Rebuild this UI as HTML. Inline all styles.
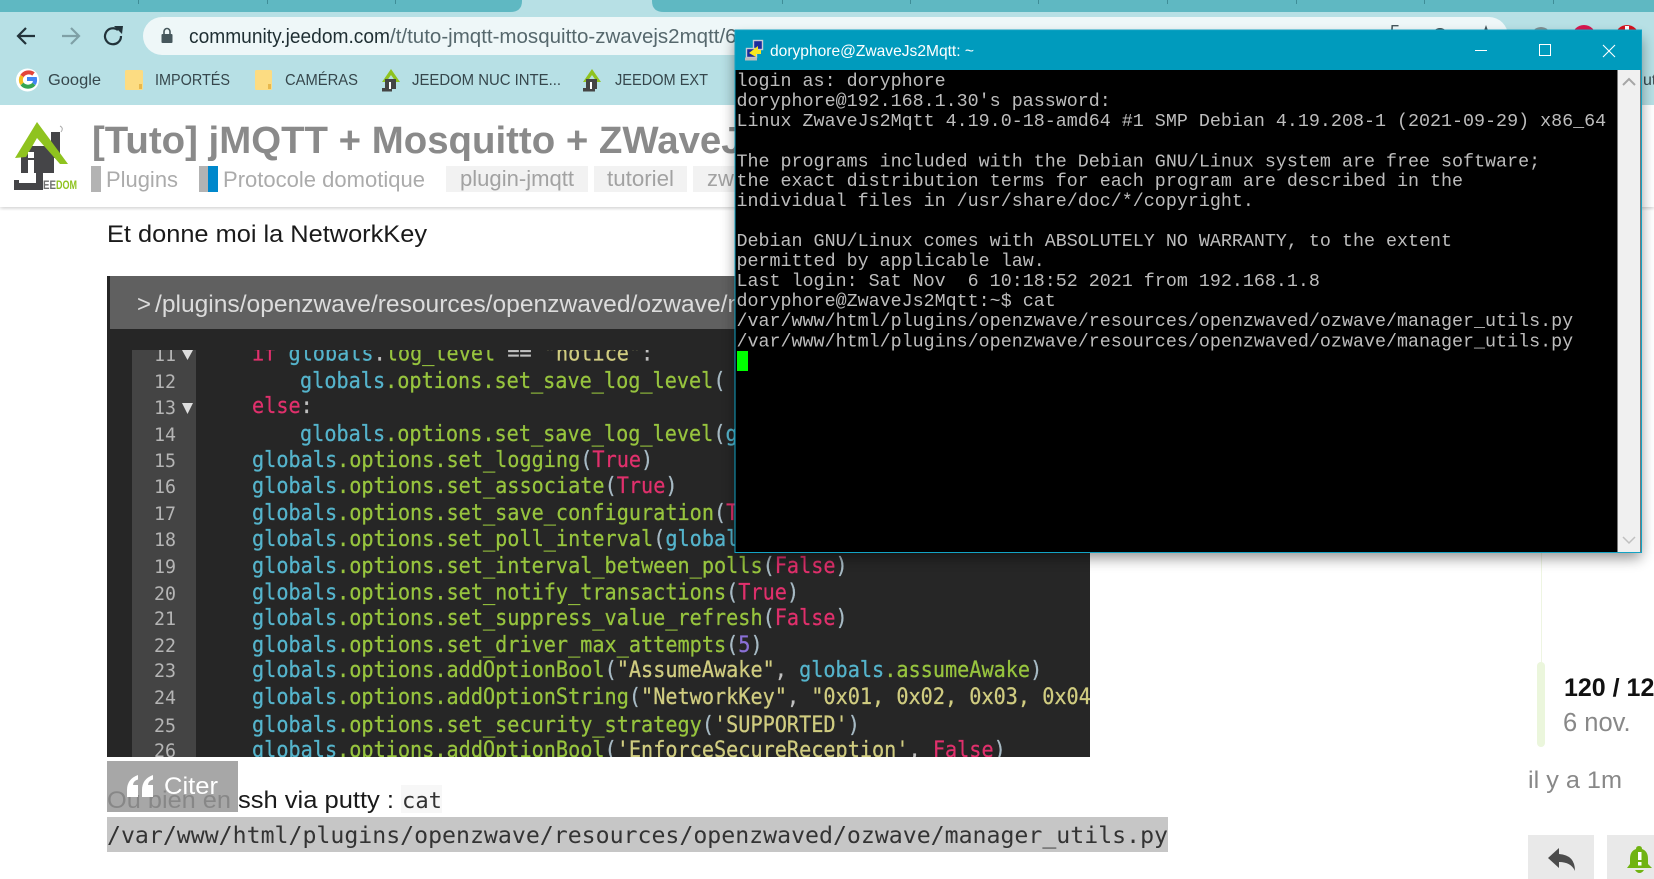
<!DOCTYPE html>
<html lang="fr"><head><meta charset="utf-8"><title>Tuto jMQTT</title>
<style>
html,body{margin:0;padding:0;background:#fff;width:1654px;height:879px;overflow:hidden}
svg{display:block}
text{font-family:"Liberation Sans",sans-serif;white-space:pre}
.c{font-family:"DejaVu Sans Mono",monospace;font-size:20.2px;fill:#55b4cc;stroke:#55b4cc;stroke-width:.25}
.c .m{fill:#97c43e;stroke:#97c43e}.c .r{fill:#e0306c;stroke:#e0306c}.c .y{fill:#d0cc80;stroke:#d0cc80}.c .p{fill:#a7bac4;stroke:#a7bac4}.c .w{fill:#c0c0c0;stroke:#c0c0c0}.c .v{fill:#8a70d6;stroke:#8a70d6}
.n{font-family:"DejaVu Sans Mono",monospace;font-size:18.3px;fill:#b5b5b5}
.t{font-family:"Liberation Mono",monospace;font-size:18.35px;fill:#bdbdbd}
.b{font-size:16px;fill:#36474c}
</style></head><body>
<svg width="1654" height="879" viewBox="0 0 1654 879" xmlns="http://www.w3.org/2000/svg">
<defs>
<filter id="sh" x="-5%" y="-5%" width="110%" height="115%"><feGaussianBlur stdDeviation="7"/></filter>
<filter id="s2" x="-2%" y="-50%" width="104%" height="200%"><feGaussianBlur stdDeviation="2"/></filter>
<clipPath id="code"><rect x="107" y="350" width="983" height="407"/></clipPath>
<clipPath id="url"><rect x="180" y="17" width="556" height="38"/></clipPath>
</defs>
<rect width="1654" height="879" fill="#fff"/>

<!-- browser chrome -->
<rect width="1654" height="105" fill="#b7e0e5"/>
<path d="M0 0H522V1Q522 12 510 12H0Z" fill="#5fb8c2"/>
<path d="M1654 0H652V1Q652 12 664 12H1654Z" fill="#5fb8c2"/>
<g fill="#3f8d97"><rect x="138" y="0" width="1" height="4"/><rect x="267" y="0" width="1" height="4"/><rect x="395" y="0" width="1" height="4"/><rect x="782" y="0" width="1" height="4"/><rect x="910" y="0" width="1" height="4"/><rect x="1038" y="0" width="1" height="4"/><rect x="1167" y="0" width="1" height="4"/><rect x="1296" y="0" width="1" height="4"/><rect x="1424" y="0" width="1" height="4"/><rect x="1553" y="0" width="1" height="4"/></g>
<rect x="143" y="17" width="1365" height="38" rx="19" fill="#eef7f8"/>
<path d="M35 36H18M26 28L18 36L26 44" fill="none" stroke="#22333a" stroke-width="2.2"/>
<path d="M62 36H79M71 28L79 36L71 44" fill="none" stroke="#7fa0a6" stroke-width="2.2"/>
<path d="M121 36A8 8 0 1 1 118 30" fill="none" stroke="#22333a" stroke-width="2.2"/><path d="M114 26L123 26L122 34Z" fill="#22333a"/>
<rect x="161.500" y="34" width="11" height="9" rx="1" fill="#46575c"/><path d="M164 34V31.500A3 3 0 0 1 170 31.500V34" fill="none" stroke="#46575c" stroke-width="1.600"/>
<g clip-path="url(#url)">
<text x="189" y="43" font-size="20" fill="#1f2f33" textLength="201" lengthAdjust="spacingAndGlyphs">community.jeedom.com</text>
<text x="390" y="43" font-size="20" fill="#56686d" textLength="358" lengthAdjust="spacingAndGlyphs">/t/tuto-jmqtt-mosquitto-zwavejs2mqtt/62</text>
</g>
<!-- toolbar bits above terminal -->
<text x="1390" y="38" font-size="18" fill="#44565b">5</text>
<circle cx="1440" cy="36" r="7" fill="none" stroke="#44565b" stroke-width="2"/>
<path d="M1486 25L1490 36H1482Z" fill="#44565b"/>
<circle cx="1541" cy="37" r="10" fill="#7f8f92"/><circle cx="1584" cy="37" r="12" fill="#d7174f"/><circle cx="1627" cy="37" r="12" fill="#d6121e"/>
<rect x="1625" y="26" width="4" height="6" fill="#fff"/>

<!-- bookmarks -->
<circle cx="27.500" cy="80" r="11.500" fill="#fff"/>
<g fill="none" stroke-width="4"><path d="M33.500 74A8 8 0 0 0 22 76" stroke="#e3453a"/><path d="M22 76A8 8 0 0 0 22 84" stroke="#f4bd1f"/><path d="M22 84A8 8 0 0 0 34 84" stroke="#35a652"/><path d="M34 84A8 8 0 0 0 35 79H27" stroke="#4285f4"/></g>
<text class="b" x="48" y="85" textLength="53" lengthAdjust="spacingAndGlyphs">Google</text>
<rect x="125" y="70" width="18" height="20" rx="1.500" fill="#fcdc82"/><rect x="139" y="84" width="3" height="5" fill="#e8b84c"/>
<text class="b" x="155" y="85" textLength="75" lengthAdjust="spacingAndGlyphs">IMPORTÉS</text>
<rect x="255" y="70" width="17" height="20" rx="1.500" fill="#fcdc82"/><rect x="268" y="84" width="3" height="5" fill="#e8b84c"/>
<text class="b" x="285" y="85" textLength="73" lengthAdjust="spacingAndGlyphs">CAMÉRAS</text>
<path d="M391 69L400 82H396L391 75L386 82H382Z" fill="#8fc31f"/><rect x="385" y="79" width="11" height="10" fill="#444"/><rect x="382" y="88" width="10" height="3.500" fill="#444"/><rect x="389" y="82" width="2" height="7" fill="#fff"/>
<text class="b" x="412" y="85" textLength="149" lengthAdjust="spacingAndGlyphs">JEEDOM NUC INTE...</text>
<path d="M592 69L601 82H597L592 75L587 82H583Z" fill="#8fc31f"/><rect x="586" y="79" width="11" height="10" fill="#444"/><rect x="583" y="88" width="12" height="3.500" fill="#444"/><rect x="590" y="82" width="2" height="7" fill="#fff"/>
<text class="b" x="615" y="85" textLength="93" lengthAdjust="spacingAndGlyphs">JEEDOM EXT</text>
<text class="b" x="1643" y="85">ut</text>

<!-- header -->
<rect x="0" y="203" width="1654" height="5" fill="#000" opacity=".22" filter="url(#s2)"/>
<rect x="0" y="105" width="1654" height="102" fill="#fff"/>
<path d="M51 132H60V158H51Z" fill="#454548"/>
<path d="M21 157Q21 146 31 146H44Q54 146 54 157V173H21Z" fill="#454548"/>
<path d="M15 158L37 122L68 164H60L37 138L26 157Z" fill="#8fc31f"/>
<path d="M60 126Q64 128 61 132" fill="none" stroke="#aaa" stroke-width="1"/>
<rect x="28" y="152" width="6" height="6" fill="#fff"/><rect x="28" y="160" width="6" height="15" fill="#fff"/>
<path d="M14 180H19V183H36V173H43V190H14Z" fill="#454548"/>
<text x="43" y="189" font-size="12" font-weight="700" fill="#6f6f6f" textLength="13" lengthAdjust="spacingAndGlyphs">EE</text>
<text x="56" y="189" font-size="12" font-weight="700" fill="#8fc31f" textLength="21" lengthAdjust="spacingAndGlyphs">DOM</text>
<text x="92" y="153" font-size="38" font-weight="700" fill="#8a8a8a" textLength="672" lengthAdjust="spacingAndGlyphs">[Tuto] jMQTT + Mosquitto + ZWaveJs</text>
<rect x="91" y="166" width="10" height="26" fill="#b3b3b3"/>
<text x="106" y="187" font-size="22" fill="#ababab" textLength="72" lengthAdjust="spacingAndGlyphs">Plugins</text>
<rect x="199" y="166" width="9" height="26" fill="#b3b3b3"/><rect x="208" y="166" width="10" height="26" fill="#0088cc"/>
<text x="223" y="187" font-size="22" fill="#ababab" textLength="202" lengthAdjust="spacingAndGlyphs">Protocole domotique</text>
<rect x="446" y="166" width="142" height="26" fill="#f2f2f2"/>
<text x="460" y="186" font-size="22" fill="#a2a2a2" textLength="114" lengthAdjust="spacingAndGlyphs">plugin-jmqtt</text>
<rect x="594" y="166" width="93" height="26" fill="#f2f2f2"/>
<text x="607" y="186" font-size="22" fill="#a2a2a2" textLength="67" lengthAdjust="spacingAndGlyphs">tutoriel</text>
<rect x="693" y="166" width="60" height="26" fill="#f2f2f2"/>
<text x="707" y="186" font-size="22" fill="#a2a2a2">zw</text>

<text x="107" y="242" font-size="24" fill="#1a1a1a" textLength="320" lengthAdjust="spacingAndGlyphs">Et donne moi la NetworkKey</text>

<!-- code image -->
<rect x="107" y="276" width="983" height="481" fill="#262626"/>
<rect x="110" y="276" width="980" height="53" fill="#606060"/>
<text x="137" y="312" font-size="24" fill="#dcdcdc">&gt;</text>
<text x="155" y="312" font-size="24" fill="#dcdcdc" textLength="593" lengthAdjust="spacingAndGlyphs">/plugins/openzwave/resources/openzwaved/ozwave/m</text>
<rect x="132" y="350" width="64" height="407" fill="#444"/>
<g clip-path="url(#code)">
<g class="n">
<text class="n" x="154" y="361">11</text><text class="n" x="154" y="388">12</text><text class="n" x="154" y="414">13</text><text class="n" x="154" y="441">14</text><text class="n" x="154" y="467">15</text><text class="n" x="154" y="493">16</text><text class="n" x="154" y="520">17</text><text class="n" x="154" y="546">18</text><text class="n" x="154" y="573">19</text><text class="n" x="154" y="600">20</text><text class="n" x="154" y="625">21</text><text class="n" x="154" y="652">22</text><text class="n" x="154" y="677">23</text><text class="n" x="154" y="704">24</text><text class="n" x="154" y="732">25</text><text class="n" x="154" y="757">26</text>
</g>
<path d="M182 350H193L187.500 360Z M182 403H193L187.500 414Z" fill="#ddd"/>
<text class="c" transform="translate(252,360.500) scale(1,1.08)"><tspan class="r">if</tspan> globals<tspan class="w">.</tspan><tspan class="m">log_level</tspan> <tspan class="w">==</tspan> <tspan class="y">"notice"</tspan><tspan class="w">:</tspan></text>
<text class="c" transform="translate(300,388) scale(1,1.08)">globals<tspan class="m">.options.set_save_log_level</tspan><tspan class="p">(</tspan></text>
<text class="c" transform="translate(252,413) scale(1,1.08)"><tspan class="r">else</tspan><tspan class="w">:</tspan></text>
<text class="c" transform="translate(300,441) scale(1,1.08)">globals<tspan class="m">.options.set_save_log_level</tspan><tspan class="p">(</tspan>g</text>
<text class="c" transform="translate(252,467) scale(1,1.08)">globals<tspan class="m">.options.set_logging</tspan><tspan class="p">(</tspan><tspan class="r">True</tspan><tspan class="p">)</tspan></text>
<text class="c" transform="translate(252,493) scale(1,1.08)">globals<tspan class="m">.options.set_associate</tspan><tspan class="p">(</tspan><tspan class="r">True</tspan><tspan class="p">)</tspan></text>
<text class="c" transform="translate(252,520) scale(1,1.08)">globals<tspan class="m">.options.set_save_configuration</tspan><tspan class="p">(</tspan><tspan class="r">T</tspan></text>
<text class="c" transform="translate(252,546) scale(1,1.08)">globals<tspan class="m">.options.set_poll_interval</tspan><tspan class="p">(</tspan>global</text>
<text class="c" transform="translate(252,573) scale(1,1.08)">globals<tspan class="m">.options.set_interval_between_polls</tspan><tspan class="p">(</tspan><tspan class="r">False</tspan><tspan class="p">)</tspan></text>
<text class="c" transform="translate(252,599.500) scale(1,1.08)">globals<tspan class="m">.options.set_notify_transactions</tspan><tspan class="p">(</tspan><tspan class="r">True</tspan><tspan class="p">)</tspan></text>
<text class="c" transform="translate(252,625) scale(1,1.08)">globals<tspan class="m">.options.set_suppress_value_refresh</tspan><tspan class="p">(</tspan><tspan class="r">False</tspan><tspan class="p">)</tspan></text>
<text class="c" transform="translate(252,652) scale(1,1.08)">globals<tspan class="m">.options.set_driver_max_attempts</tspan><tspan class="p">(</tspan><tspan class="v">5</tspan><tspan class="p">)</tspan></text>
<text class="c" transform="translate(252,677) scale(1,1.08)">globals<tspan class="m">.options.addOptionBool</tspan><tspan class="p">(</tspan><tspan class="y">"AssumeAwake"</tspan><tspan class="w">, </tspan>globals<tspan class="m">.assumeAwake</tspan><tspan class="p">)</tspan></text>
<text class="c" transform="translate(252,704) scale(1,1.08)">globals<tspan class="m">.options.addOptionString</tspan><tspan class="p">(</tspan><tspan class="y">"NetworkKey"</tspan><tspan class="w">, </tspan><tspan class="y">"0x01, 0x02, 0x03, 0x04</tspan></text>
<text class="c" transform="translate(252,732) scale(1,1.08)">globals<tspan class="m">.options.set_security_strategy</tspan><tspan class="p">(</tspan><tspan class="y">'SUPPORTED'</tspan><tspan class="p">)</tspan></text>
<text class="c" transform="translate(252,757) scale(1,1.08)">globals<tspan class="m">.options.addOptionBool</tspan><tspan class="p">(</tspan><tspan class="y">'EnforceSecureReception'</tspan><tspan class="w">, </tspan><tspan class="r">False</tspan><tspan class="p">)</tspan></text>
</g>

<!-- body bottom -->
<text x="238" y="808" font-size="24" fill="#1a1a1a" textLength="156" lengthAdjust="spacingAndGlyphs">ssh via putty :</text>
<rect x="401" y="785" width="41" height="28" fill="#f7f7f7"/>
<text x="402" y="808" style="font-family:'DejaVu Sans Mono',monospace" font-size="22" fill="#333" textLength="40" lengthAdjust="spacingAndGlyphs">cat</text>
<rect x="107" y="817" width="1061" height="35" fill="#c6c6c6"/>
<text x="107" y="843" style="font-family:'DejaVu Sans Mono',monospace" font-size="23.200" fill="#333" textLength="1061" lengthAdjust="spacingAndGlyphs">/var/www/html/plugins/openzwave/resources/openzwaved/ozwave/manager_utils.py</text>
<text x="107" y="808" font-size="24" fill="#222" textLength="124" lengthAdjust="spacingAndGlyphs">Ou bien en</text>
<rect x="107" y="761" width="131" height="51" fill="#999" fill-opacity=".86"/>
<path d="M138 775Q127 779 127 790V797H138V785H133Q133 781 138 779.500Z M153 775Q142 779 142 790V797H153V785H148Q148 781 153 779.500Z" fill="#fff"/>
<text x="164" y="794" font-size="24" fill="#fff" textLength="54" lengthAdjust="spacingAndGlyphs">Citer</text>

<!-- timeline -->
<rect x="1541" y="552" width="1" height="112" fill="#eef5e2"/>
<rect x="1537" y="662" width="8" height="85" rx="4" fill="#ebf6dc"/>
<text x="1564" y="696" font-size="25" font-weight="700" fill="#111">120 / 12</text>
<text x="1563" y="731" font-size="25.500" fill="#888">6 nov.</text>
<text x="1528" y="788" font-size="24" fill="#888" textLength="94" lengthAdjust="spacingAndGlyphs">il y a 1m</text>
<rect x="1528" y="835" width="66" height="44" fill="#e9e9e9"/>
<rect x="1607" y="835" width="47" height="44" fill="#e9e9e9"/>
<path d="M1548 858L1559 848V854Q1575 855 1575 871Q1571 862 1559 862V868Z" fill="#4c4c4c"/>
<path d="M1639 846Q1642 846 1642 849Q1648 851 1648 859V864L1652 868H1627L1630 864V859Q1630 851 1636 849Q1636 846 1639 846Z" fill="#70b312"/>
<path d="M1635 870H1644Q1642 873 1639.500 873Q1637 873 1635 870Z" fill="#70b312"/>
<rect x="1638" y="852" width="3.500" height="8" fill="#fff"/><rect x="1638" y="862" width="3.500" height="3.500" fill="#fff"/>

<!-- terminal -->
<rect x="735" y="38" width="906" height="520" fill="#000" opacity=".42" filter="url(#sh)"/>
<rect x="735" y="30" width="906" height="40" fill="#009bbd"/>
<rect x="735" y="70" width="906" height="482.500" fill="#000"/>
<rect x="1617.500" y="70" width="23" height="482" fill="#f0f0f0"/>
<rect x="735" y="30" width="906.500" height="522.500" fill="none" stroke="#13a3c4" stroke-width="1"/>
<path d="M1623 85L1629 79L1635 85" fill="none" stroke="#a6a6a6" stroke-width="2"/>
<path d="M1623 537L1629 543L1635 537" fill="none" stroke="#c0c0c0" stroke-width="1.500"/>
<!-- putty icon -->
<rect x="753.500" y="40.500" width="9" height="9" fill="#1c2c9c" stroke="#c8ccd4" stroke-width="1.400"/>
<rect x="746.500" y="48.500" width="10" height="9" fill="#1c2c9c" stroke="#c8ccd4" stroke-width="1.400"/>
<rect x="745" y="57.500" width="12" height="3" fill="#bdbdbd"/>
<path d="M749 53L758 46V50H761V54H756V57Z" fill="#f7e81f"/>
<text x="770" y="56" font-size="16" fill="#fff" textLength="204" lengthAdjust="spacingAndGlyphs">doryphore@ZwaveJs2Mqtt: ~</text>
<rect x="1475" y="50" width="12" height="1" fill="#fff"/>
<rect x="1539.500" y="44.500" width="11" height="11" fill="none" stroke="#fff" stroke-width="1"/>
<path d="M1603 45L1615 57M1615 45L1603 57" stroke="#fff" stroke-width="1.100"/>
<text class="t" x="736.500" y="86">login as: doryphore</text>
<text class="t" x="736.500" y="106">doryphore@192.168.1.30's password:</text>
<text class="t" x="736.500" y="126">Linux ZwaveJs2Mqtt 4.19.0-18-amd64 #1 SMP Debian 4.19.208-1 (2021-09-29) x86_64</text>
<text class="t" x="736.500" y="166.500">The programs included with the Debian GNU/Linux system are free software;</text>
<text class="t" x="736.500" y="186">the exact distribution terms for each program are described in the</text>
<text class="t" x="736.500" y="206">individual files in /usr/share/doc/*/copyright.</text>
<text class="t" x="736.500" y="246">Debian GNU/Linux comes with ABSOLUTELY NO WARRANTY, to the extent</text>
<text class="t" x="736.500" y="266">permitted by applicable law.</text>
<text class="t" x="736.500" y="286">Last login: Sat Nov  6 10:18:52 2021 from 192.168.1.8</text>
<text class="t" x="736.500" y="306">doryphore@ZwaveJs2Mqtt:~$ cat</text>
<text class="t" x="736.500" y="326">/var/www/html/plugins/openzwave/resources/openzwaved/ozwave/manager_utils.py</text>
<text class="t" x="736.500" y="346.500">/var/www/html/plugins/openzwave/resources/openzwaved/ozwave/manager_utils.py</text>
<rect x="737" y="351" width="11" height="20" fill="#00ff00"/>
</svg>
</body></html>
